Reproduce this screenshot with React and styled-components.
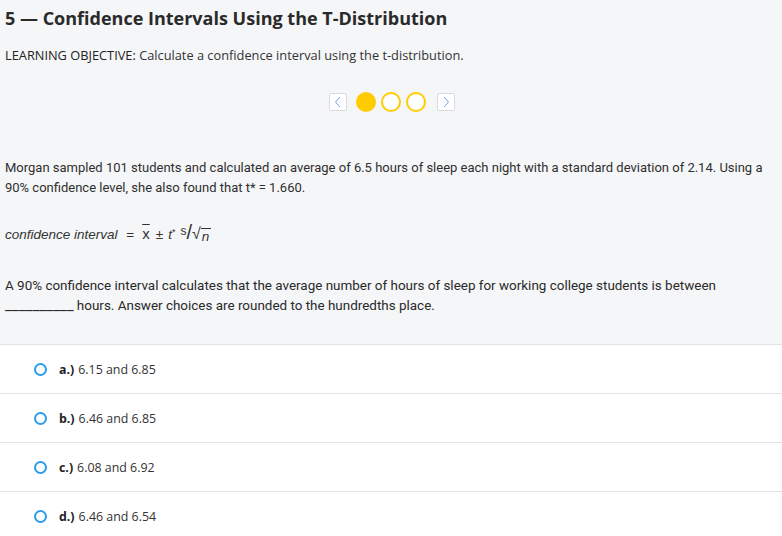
import React from "react";
import styled, { createGlobalStyle } from "styled-components";

const Global = createGlobalStyle`
  html, body { margin: 0; padding: 0; background: #ffffff; }
  body { font-family: "Open Sans", "Lato", sans-serif; color: #2b2b2b; }
`;

const Page = styled.div`
  width: 782px;
  height: 536px;
  overflow: hidden;
  display: flex;
  flex-direction: column;
`;

const Header = styled.section`
  flex-shrink: 0;
  background: #f5f6f8;
  border-bottom: 1px solid #e2e3e5;
  padding: 4px 5px 0 5px;
  height: 340px;
  box-sizing: content-box;
`;

const Title = styled.h1`
  margin: 0;
  font-size: 18px;
  font-weight: 700;
  line-height: 28px;
  color: #2a2a2a;
`;

const Objective = styled.p`
  margin: 14px 0 0 0;
  font-size: 12.8px;
  line-height: 18px;
  color: #333;
  span { color: #222; }
`;

const Pager = styled.div`
  display: flex;
  justify-content: center;
  align-items: center;
  gap: 5px;
  margin-top: 26px;
  height: 24px;
  padding-left: 2px;
`;

const NavButton = styled.button`
  width: 18px;
  height: 18px;
  padding: 0;
  border: 1px solid #d8dadd;
  border-radius: 2px;
  background: #ffffff;
  display: flex;
  align-items: center;
  justify-content: center;
  margin: ${(p) => (p.$side === "left" ? "0 4px 0 0" : "0 0 0 6px")};
`;

const Dot = styled.span`
  width: 20px;
  height: 20px;
  border-radius: 50%;
  box-sizing: border-box;
  border: 2px solid #ffcc00;
  background: ${(p) => (p.$active ? "#ffcc00" : "#ffffff")};
`;

const Para = styled.p`
  margin: 44px 0 0 0;
  font-family: "Roboto", "Liberation Sans", sans-serif;
  font-size: 13px;
  line-height: 20px;
  color: #2f2f2f;
`;

const Formula = styled.p`
  margin: 26px 0 0 0;
  font-family: "Liberation Sans", Arial, sans-serif;
  font-style: italic;
  font-size: 13.5px;
  line-height: 20px;
  color: #333;
  display: flex;
  align-items: baseline;
  gap: 5px;
`;

const Plain = styled.span`
  font-style: normal;
`;

const Bar = styled.span`
  font-style: normal;
  font-size: 15px;
  text-decoration: overline;
  margin: 0 1px 0 3px;
`;

const Sup = styled.span`
  font-size: ${(p) => p.$size || "9px"};
  font-style: normal;
  position: relative;
  top: -4px;
`;

const Slash = styled.span`
  font-style: normal;
  font-size: 20px;
  line-height: 14px;
`;

const Sqrt = styled.span`
  display: inline-flex;
  align-items: flex-end;
  font-style: normal;
  font-size: 16px;
`;

const Rad = styled.span`
  border-top: 1px solid #333;
  padding: 0 2px 0 1px;
  font-style: italic;
  font-size: 13.5px;
  line-height: 15px;
`;

const Question = styled.p`
  margin: 30px 0 0 0;
  font-family: "Roboto", "Liberation Sans", sans-serif;
  font-size: 13.45px;
  line-height: 20px;
  color: #2a2a2a;
`;

const Blank = styled.span`
  font-size: 15.2px;
  line-height: 0;
`;

const Answers = styled.ul`
  list-style: none;
  margin: 0;
  padding: 0;
`;

const Answer = styled.li`
  flex-shrink: 0;
  height: 48px;
  border-bottom: 1px solid #e2e3e5;
  display: flex;
  align-items: center;
  padding-left: 34px;
  gap: 7px;
  font-size: 12.4px;
  color: #333;
`;

const Radio = styled.span`
  width: 13px;
  height: 13px;
  border-radius: 50%;
  border: 2px solid #2a9cf0;
  box-sizing: border-box;
  background: #fff;
  margin-right: 5px;
`;

const Letter = styled.b`
  font-weight: 700;
  color: #222;
  margin-right: -3px;
`;

const Chevron = ({ dir }) => (
  <svg width="10" height="12" viewBox="0 0 10 12">
    <path
      d={dir === "left" ? "M7 1 L2.5 6 L7 11" : "M3 1 L7.5 6 L3 11"}
      fill="none"
      stroke="#6ea0f0"
      strokeWidth="1"
    />
  </svg>
);

const answers = [
  ["a.)", "6.15 and 6.85"],
  ["b.)", "6.46 and 6.85"],
  ["c.)", "6.08 and 6.92"],
  ["d.)", "6.46 and 6.54"],
];

export default function App() {
  return (
    <Page>
      <Global />
      <Header>
        <Title>5 — Confidence Intervals Using the T-Distribution</Title>
        <Objective>
          <span>LEARNING OBJECTIVE:</span> Calculate a confidence interval using the t-distribution.
        </Objective>
        <Pager>
          <NavButton $side="left" aria-label="previous"><Chevron dir="left" /></NavButton>
          <Dot $active />
          <Dot />
          <Dot />
          <NavButton $side="right" aria-label="next"><Chevron dir="right" /></NavButton>
        </Pager>
        <Para>
          Morgan sampled 101 students and calculated an average of 6.5 hours of sleep each night with a standard deviation of 2.14. Using a 90% confidence level, she also found that t* = 1.660.
        </Para>
        <Formula>
          <span>confidence interval</span>
          <Plain>&nbsp;=</Plain>
          <Bar>x</Bar>
          <Plain>±</Plain>
          <span>t<Sup>*</Sup></span>
          <span><Sup $size="12px">s</Sup><Slash>/</Slash><Sqrt>√<Rad>n</Rad></Sqrt></span>
        </Formula>
        <Question>
          A 90% confidence interval calculates that the average number of hours of sleep for working college students is between <Blank>__________</Blank> hours. Answer choices are rounded to the hundredths place.
        </Question>
      </Header>
      <Answers>
        {answers.map(([l, t]) => (
          <Answer key={l}>
            <Radio />
            <Letter>{l}</Letter>
            <span>{t}</span>
          </Answer>
        ))}
      </Answers>
    </Page>
  );
}
